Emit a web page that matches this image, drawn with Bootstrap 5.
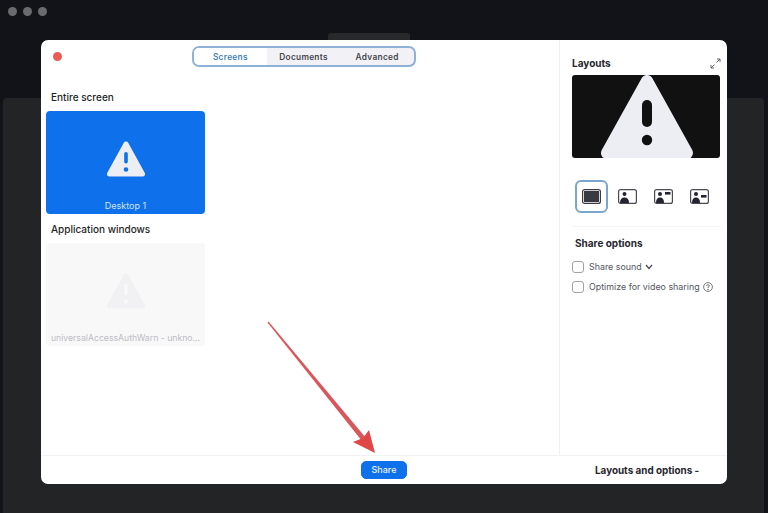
<!DOCTYPE html>
<html lang="en">
<head>
    <meta charset="UTF-8">
    <meta name="viewport" content="width=device-width, initial-scale=1.0">
    <title>Share screen</title>
    <link href="https://cdn.jsdelivr.net/npm/bootstrap@5.3.2/dist/css/bootstrap.min.css" rel="stylesheet">
    <style>
        html, body { height: 513px; overflow: hidden; }
        body {
            font-family: "Inter", "Liberation Sans", sans-serif;
            background-color: #111318;
            color: #232333;
            position: relative;
        }
        /* window behind the dialog */
        .topbar { height: 98px; padding: 7px 0 0 8px; }
        .win-dots { gap: 6px; }
        .win-dot { width: 9px; height: 9px; border-radius: 50%; background-color: #6a6b6f; }
        .notch { width: 82px; height: 8px; margin: 17px 0 0 320px; background-color: #28292a; border-radius: 3px 3px 0 0; }
        .backdrop { height: 415px; margin: 0 4px 0 3px; background-color: #232426; border-radius: 4px 4px 0 0; }

        .share-dialog {
            position: absolute;
            top: 40px; left: 41px;
            width: 686px; height: 444px;
            background-color: #fff;
            border-radius: 7px;
            overflow: hidden;
        }
        .main-row { height: 415px; }
        .left-pane { width: 518px; padding: 0 5px; }
        .right-pane { width: 168px; border-left: 1px solid #f1f1f3; padding: 0 6px 0 12px; }

        .top-row { height: 33px; padding-top: 6px; }
        .close-dot { width: 9px; height: 9px; margin: 6px 0 0 7px; border-radius: 50%; background-color: #ec5a55; }
        .tabs {
            width: 224px; height: 21px;
            margin-left: 130px;
            border: 2px solid #8fb1d8;
            border-radius: 7px;
            background-color: #f2f2f6;
            overflow: hidden;
            font-size: 8.3px;
            font-weight: 600;
            letter-spacing: .3px;
        }
        .tabs > div { line-height: 18px; text-align: center; }
        .tab-active { width: 73px; background-color: #fff; color: #3f82b8; }
        .tab { width: 74px; color: #45464e; }

        .section-title { font-size: 10px; font-weight: 500; color: #1f1f27; margin: 0; padding-left: 5px; }
        .title-first { margin-top: 17px; }
        .title-second { margin-top: 8px; }
        .thumb { width: 159px; height: 103px; margin-top: 6px; padding: 28px 0 2px; border-radius: 4px; }
        .thumb-on { background-color: #0e71eb; color: #cfe4fb; }
        .thumb-off { background-color: #f8f8f9; color: #bcbdc3; padding-bottom: 2px; }
        .thumb-label { font-size: 9px; line-height: 12px; white-space: nowrap; }
        .thumb-off .thumb-label { font-size: 8.7px; }

        .layouts-head { margin-top: 16px; }
        .layouts-title { font-size: 10px; font-weight: 700; color: #26262e; margin: 0; }
        .preview { width: 148px; height: 83px; margin-top: 4px; background-color: #111; border-radius: 3px; overflow: hidden; }
        .layout-row { height: 35px; margin: 21px 0 0 3px; gap: 3px; }
        .layout-btn { width: 33px; height: 33px; border-radius: 6px; border: 2px solid transparent; }
        .layout-btn.active { border-color: #7aa6cc; }
        .options-head { border-top: 1px solid #f4f4f6; margin-top: 12px; padding: 9px 0 0 3px; }
        .options-title { font-size: 10px; font-weight: 700; color: #26262e; margin: 0; }
        .opt { font-size: 8.9px; color: #55565e; line-height: 12px; gap: 5px; }
        .opt svg { margin-left: -2px; }
        .opt-first { margin-top: 10px; }
        .opt-next { margin-top: 8px; }
        .box { width: 12px; height: 12px; border: 1px solid #a2a3a9; border-radius: 3px; background-color: #fff; }

        .footer-bar {
            height: 29px;
            border-top: 1px solid #f1f1f3;
            display: grid;
            grid-template-columns: 1fr 46px 1fr;
            align-items: center;
        }
        .share-btn {
            width: 46px; height: 18px; padding: 0;
            font-size: 9px; font-weight: 500; line-height: 16px;
            background-color: #0e71eb; border-color: #0e71eb; color: #e8f2fd;
            border-radius: 5px;
        }
        .footer-link { padding-left: 188px; font-size: 9.9px; font-weight: 700; color: #26262e; white-space: nowrap; }
        .arrow { position: absolute; top: 0; left: 0; pointer-events: none; }
    </style>
</head>
<body>
    <div class="topbar">
        <div class="win-dots d-flex">
            <div class="win-dot"></div><div class="win-dot"></div><div class="win-dot"></div>
        </div>
        <div class="notch"></div>
    </div>
    <div class="backdrop"></div>

    <div class="share-dialog d-flex flex-column">
        <div class="main-row d-flex">
            <!-- Left pane -->
            <div class="left-pane">
                <div class="top-row d-flex">
                    <div class="close-dot"></div>
                    <div class="tabs d-flex">
                        <div class="tab-active">Screens</div>
                        <div class="tab">Documents</div>
                        <div class="tab">Advanced</div>
                    </div>
                </div>
                <p class="section-title title-first">Entire screen</p>
                <div class="thumb thumb-on d-flex flex-column align-items-center">
                    <svg width="40" height="38" viewBox="0 0 40 38"><path d="M20 5 L36.5 35 H3.5 Z" fill="#eceef3" stroke="#eceef3" stroke-width="5" stroke-linejoin="round"/><rect x="18.2" y="13" width="3.6" height="11.5" rx="1.8" fill="#0e71eb"/><circle cx="20" cy="30.5" r="2.3" fill="#0e71eb"/></svg>
                    <div class="thumb-label mt-auto">Desktop 1</div>
                </div>
                <p class="section-title title-second">Application windows</p>
                <div class="thumb thumb-off d-flex flex-column align-items-center">
                    <svg width="40" height="38" viewBox="0 0 40 38"><path d="M20 5 L36.5 35 H3.5 Z" fill="#f1f1f4" stroke="#f1f1f4" stroke-width="5" stroke-linejoin="round"/><rect x="18.2" y="13" width="3.6" height="11.5" rx="1.8" fill="#f8f8f9"/><circle cx="20" cy="30.5" r="2.3" fill="#f8f8f9"/></svg>
                    <div class="thumb-label mt-auto">universalAccessAuthWarn - unkno...</div>
                </div>
            </div>
            <!-- Right pane -->
            <div class="right-pane">
                <div class="layouts-head d-flex justify-content-between align-items-center">
                    <p class="layouts-title">Layouts</p>
                    <svg width="11" height="11" viewBox="0 0 11 11" fill="none" stroke="#55565e" stroke-width=".9"><path d="M6.5 4.5 L10 1 M7 1 H10 V4 M4.5 6.5 L1 10 M1 7 V10 H4"/></svg>
                </div>
                <div class="preview">
                    <svg class="d-block" width="148" height="83" viewBox="0 0 148 83"><path d="M75 6 L35 78 H115 Z" fill="#eceef4" stroke="#eceef4" stroke-width="12" stroke-linejoin="round"/><rect x="70" y="25" width="10" height="27" rx="5" fill="#111"/><circle cx="75" cy="65" r="5.2" fill="#111"/></svg>
                </div>
                <div class="layout-row d-flex align-items-center">
                    <div class="layout-btn active d-flex align-items-center justify-content-center">
                        <svg width="19" height="15" viewBox="0 0 19 15"><rect x=".6" y=".6" width="17.8" height="13.8" rx="2" fill="#fff" stroke="#3a3a42" stroke-width="1.2"/><rect x="2" y="2" width="15" height="11" fill="#3a3a42"/></svg>
                    </div>
                    <div class="layout-btn d-flex align-items-center justify-content-center">
                        <svg width="19" height="15" viewBox="0 0 19 15"><rect x=".6" y=".6" width="17.8" height="13.8" rx="2" fill="#fff" stroke="#4a4a52" stroke-width="1.2"/><circle cx="6.5" cy="5" r="2" fill="#232333"/><path d="M2 14 Q2 8.5 6.5 8.5 Q11 8.5 11 14 Z" fill="#232333"/></svg>
                    </div>
                    <div class="layout-btn d-flex align-items-center justify-content-center">
                        <svg width="19" height="15" viewBox="0 0 19 15"><rect x=".6" y=".6" width="17.8" height="13.8" rx="2" fill="#fff" stroke="#4a4a52" stroke-width="1.2"/><circle cx="6" cy="5" r="2" fill="#232333"/><path d="M2 14 Q2 8.5 6 8.5 Q10 8.5 10 14 Z" fill="#232333"/><rect x="11" y="3" width="5.5" height="2.6" fill="#232333"/></svg>
                    </div>
                    <div class="layout-btn d-flex align-items-center justify-content-center">
                        <svg width="19" height="15" viewBox="0 0 19 15"><rect x=".6" y=".6" width="17.8" height="13.8" rx="2" fill="#fff" stroke="#4a4a52" stroke-width="1.2"/><circle cx="6" cy="5" r="2" fill="#232333"/><path d="M2 14 Q2 8.5 6 8.5 Q10 8.5 10 14 Z" fill="#232333"/><rect x="11" y="6" width="5.5" height="2.6" fill="#232333"/></svg>
                    </div>
                </div>
                <div class="options-head">
                    <p class="options-title">Share options</p>
                </div>
                <div class="opt opt-first d-flex align-items-center">
                    <span class="box"></span><span>Share sound</span>
                    <svg width="8" height="6" viewBox="0 0 8 6" fill="none" stroke="#44454d" stroke-width="1.2"><path d="M1 1 L4 4.5 L7 1"/></svg>
                </div>
                <div class="opt opt-next d-flex align-items-center">
                    <span class="box"></span><span>Optimize for video sharing</span>
                    <svg width="10" height="10" viewBox="0 0 10 10" fill="none" stroke="#55565e" stroke-width=".8"><circle cx="5" cy="5" r="4.4"/><path d="M3.6 4 Q3.7 2.7 5 2.7 Q6.4 2.7 6.4 3.8 Q6.4 4.6 5 5.2 V6"/><circle cx="5" cy="7.4" r=".4"/></svg>
                </div>
            </div>
        </div>
        <div class="footer-bar">
            <span></span>
            <button type="button" class="btn btn-primary share-btn">Share</button>
            <span class="footer-link">Layouts and options -</span>
        </div>
    </div>

    <!-- red annotation arrow -->
    <svg class="arrow" width="768" height="513" viewBox="0 0 768 513">
        <path d="M267.5 322.5 L268.5 321.5 L366 438 L362 441 Z" fill="#d9565a"/>
        <path d="M375 453 L353 442 L363 438 L369 430 Z" fill="#e04848"/>
    </svg>
</body>
</html>
